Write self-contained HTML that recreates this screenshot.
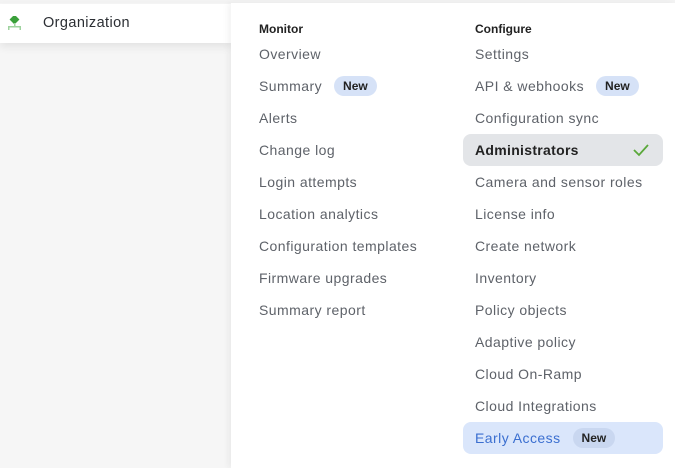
<!DOCTYPE html>
<html><head><style>
body{margin:0;width:675px;height:468px;background:#f6f6f6;font-family:"Liberation Sans",sans-serif;position:relative;overflow:hidden}
.top{position:absolute;left:0;top:0;width:675px;height:3px;background:#f3f3f3}
.org{position:absolute;left:0;top:4px;width:232px;height:39px;background:#fff;box-shadow:0 4px 8px rgba(0,0,0,.08)}
.org span{position:absolute;left:43px;top:11px;font-size:14.5px;color:#2b2e33;letter-spacing:0.4px}
.panel{position:absolute;left:231px;top:3px;width:444px;height:465px;background:#fff;box-shadow:-3px 0 6px rgba(0,0,0,.05)}
.h{position:absolute;font-size:12px;font-weight:bold;color:#222}
.i{position:absolute;font-size:14px;color:#5e6269;line-height:20px;letter-spacing:0.45px}
.b{display:inline-block;margin-left:12px;background:#d6e2f7;color:#222;font-size:12px;font-weight:bold;border-radius:10px;padding:0 9px;line-height:20px;vertical-align:top;letter-spacing:0}
.hl{position:absolute;left:463px;width:200px;height:32px;border-radius:8px}
</style></head><body>
<div class="top"></div>
<div class="org">
<svg style="position:absolute;left:7px;top:12px" width="16" height="16" viewBox="0 0 16 16"><rect x="4" y="0" width="7" height="7" transform="rotate(45 7.5 3.5)" fill="#3aa03a"/><rect x="7" y="7" width="1.5" height="4" fill="#9fd39f"/><rect x="1" y="10" width="13" height="1.5" fill="#9fd39f"/><rect x="1" y="10" width="1.5" height="4" fill="#9fd39f"/><rect x="12.5" y="10" width="1.5" height="4" fill="#9fd39f"/></svg>
<span>Organization</span></div>
<div class="panel"></div>
<div class="hl" style="top:134px;background:#e3e5e8"></div>
<div class="hl" style="top:422px;background:#dae6fb"></div>
<div class="h" style="left:259px;top:22px">Monitor</div>
<div class="h" style="left:475px;top:22px">Configure</div>
<div class="i" style="left:259px;top:44px">Overview</div>
<div class="i" style="left:259px;top:76px">Summary<span class="b">New</span></div>
<div class="i" style="left:259px;top:108px">Alerts</div>
<div class="i" style="left:259px;top:140px">Change log</div>
<div class="i" style="left:259px;top:172px">Login attempts</div>
<div class="i" style="left:259px;top:204px">Location analytics</div>
<div class="i" style="left:259px;top:236px">Configuration templates</div>
<div class="i" style="left:259px;top:268px">Firmware upgrades</div>
<div class="i" style="left:259px;top:300px">Summary report</div>
<div class="i" style="left:475px;top:44px">Settings</div>
<div class="i" style="left:475px;top:76px">API &amp; webhooks<span class="b">New</span></div>
<div class="i" style="left:475px;top:108px">Configuration sync</div>
<div class="i" style="left:475px;top:140px;color:#222;font-weight:bold;letter-spacing:0.3px">Administrators</div>
<svg style="position:absolute;left:632px;top:142px" width="18" height="16" viewBox="0 0 18 16"><path d="M2 8 L7 13 L16 3" fill="none" stroke="#5aa83a" stroke-width="1.8"/></svg>
<div class="i" style="left:475px;top:172px">Camera and sensor roles</div>
<div class="i" style="left:475px;top:204px">License info</div>
<div class="i" style="left:475px;top:236px">Create network</div>
<div class="i" style="left:475px;top:268px">Inventory</div>
<div class="i" style="left:475px;top:300px">Policy objects</div>
<div class="i" style="left:475px;top:332px">Adaptive policy</div>
<div class="i" style="left:475px;top:364px">Cloud On-Ramp</div>
<div class="i" style="left:475px;top:396px">Cloud Integrations</div>
<div class="i" style="left:475px;top:428px;color:#3b6fd0">Early Access<span class="b" style="background:#c9d7f0">New</span></div>
</body></html>
